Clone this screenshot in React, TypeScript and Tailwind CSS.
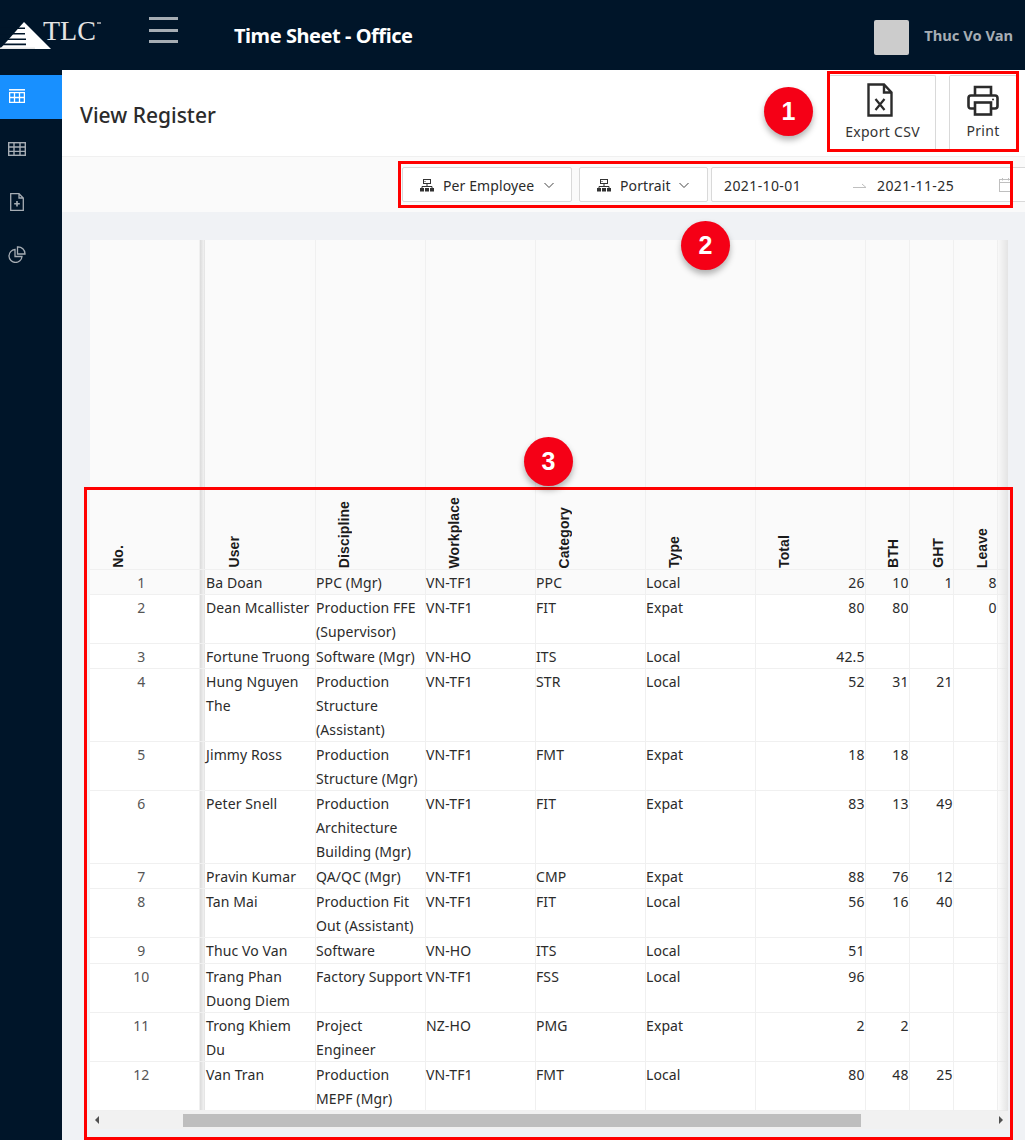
import React from "react";

type Row = { h: string; n: number; u: string; d: string; w: string; c: string; t: string; total?: string; bth?: string; ght?: string; leave?: string; bg?: boolean };
const rows: Row[] = [
  { h: "h-[25px]", n: 1, u: "Ba Doan", d: "PPC (Mgr)", w: "VN-TF1", c: "PPC", t: "Local", total: "26", bth: "10", ght: "1", leave: "8", bg: true },
  { h: "h-[49px]", n: 2, u: "Dean Mcallister", d: "Production FFE (Supervisor)", w: "VN-TF1", c: "FIT", t: "Expat", total: "80", bth: "80", leave: "0" },
  { h: "h-[25px]", n: 3, u: "Fortune Truong", d: "Software (Mgr)", w: "VN-HO", c: "ITS", t: "Local", total: "42.5" },
  { h: "h-[73px]", n: 4, u: "Hung Nguyen The", d: "Production Structure (Assistant)", w: "VN-TF1", c: "STR", t: "Local", total: "52", bth: "31", ght: "21" },
  { h: "h-[49px]", n: 5, u: "Jimmy Ross", d: "Production Structure (Mgr)", w: "VN-TF1", c: "FMT", t: "Expat", total: "18", bth: "18" },
  { h: "h-[73px]", n: 6, u: "Peter Snell", d: "Production Architecture Building (Mgr)", w: "VN-TF1", c: "FIT", t: "Expat", total: "83", bth: "13", ght: "49" },
  { h: "h-[25px]", n: 7, u: "Pravin Kumar", d: "QA/QC (Mgr)", w: "VN-TF1", c: "CMP", t: "Expat", total: "88", bth: "76", ght: "12" },
  { h: "h-[49px]", n: 8, u: "Tan Mai", d: "Production Fit Out (Assistant)", w: "VN-TF1", c: "FIT", t: "Local", total: "56", bth: "16", ght: "40" },
  { h: "h-[26px]", n: 9, u: "Thuc Vo Van", d: "Software", w: "VN-HO", c: "ITS", t: "Local", total: "51" },
  { h: "h-[49px]", n: 10, u: "Trang Phan Duong Diem", d: "Factory Support", w: "VN-TF1", c: "FSS", t: "Local", total: "96" },
  { h: "h-[49px]", n: 11, u: "Trong Khiem Du", d: "Project Engineer", w: "NZ-HO", c: "PMG", t: "Expat", total: "2", bth: "2" },
  { h: "h-[49px]", n: 12, u: "Van Tran", d: "Production MEPF (Mgr)", w: "VN-TF1", c: "FMT", t: "Local", total: "80", bth: "48", ght: "25" },
];

const Org = () => (
  <svg width="14" height="14" viewBox="0 0 14 14" fill="none" stroke="#333" strokeWidth="1">
    <rect x="3.5" y="1.5" width="7" height="4" />
    <path d="M4.5 3.5h1M7 5.5v3M2 10V8.5h10V10" />
    <rect x="0.5" y="10.5" width="3" height="2.5" fill="#333" />
    <rect x="5.5" y="10.5" width="3" height="2.5" fill="#333" />
    <rect x="10.5" y="10.5" width="3" height="2.5" fill="#333" />
  </svg>
);

const Chevron = () => (
  <svg width="10" height="10" viewBox="0 0 10 10" fill="none" stroke="#444" strokeWidth="1"><path d="M0.5 3l4.5 4.5L9.5 3" /></svg>
);

const Badge = ({ n, pos }: { n: number; pos: string }) => (
  <div className={`absolute w-[49px] h-[49px] rounded-full bg-[#f50016] text-white flex items-center justify-center text-[25px] font-bold font-['Liberation_Sans',sans-serif] shadow-[0_4px_6px_rgba(0,0,0,0.3)] ${pos}`}>
    {n}
  </div>
);

const Hd = ({ t, pad }: { t: string; pad: string }) => (
  <th className="p-0 align-bottom border-r border-b border-[#f0f0f0] bg-[#fafafa]">
    <div className={`h-[329px] flex items-end pb-[1px] ${pad}`}>
      <span className="[writing-mode:vertical-rl] rotate-180 font-bold text-[14px] leading-[22px] text-[#1a1a1a] font-['Liberation_Sans',sans-serif]">{t}</span>
    </div>
  </th>
);

const Td = ({ children, right, extra = "pl-[0.5px]" }: { children?: React.ReactNode; right?: boolean; extra?: string }) => (
  <td className={`p-0 align-top border-r border-b border-[#f0f0f0] leading-[24px] ${right ? "text-right" : ""} ${extra}`}>
    <div className="pt-[0.5px] -mb-[0.5px]">{children}</div>
  </td>
);

export default function App() {
  return (
    <div className="relative w-[1025px] h-[1140px] overflow-hidden bg-[#f0f2f5] text-[14px] tracking-[0.1px] text-[#2b2b2b] font-['Noto_Sans',sans-serif] flex flex-col">
      <header className="h-[70px] shrink-0 bg-[#001529] flex items-center">
        <div className="w-[149px] h-full relative">
          <svg width="52" height="28" viewBox="0 0 52 28" className="absolute left-0 top-[21px]">
            <path d="M24 1L51 28H0L24 1Z" fill="#fff" />
            <path d="M0 6.500H25V8H0ZM0 12H25V13.500H0ZM0 17.500H26V19H0ZM0 22.500H26V24.300H0Z" fill="#001529" />
            <path d="M0 26.500H35V28H0Z" fill="#e8e8e8" />
          </svg>
          <span className="absolute left-[43px] top-[17px] font-['Liberation_Serif',serif] text-[28px] leading-[28px] tracking-[0px] text-[#e4e4e4]">TLC</span>
          <span className="absolute left-[97px] top-[22px] w-[4px] h-[2px] bg-[#8a8f96]" />
        </div>
        <div className="w-[29px] h-[26px] flex flex-col justify-between mt-[-10px]">
          <span className="h-[3px] bg-[#a6adb4]" /><span className="h-[3px] bg-[#a6adb4]" /><span className="h-[3px] bg-[#a6adb4]" />
        </div>
        <div className="ml-[56px] mt-[2px] text-[20px] leading-[28px] font-bold text-white tracking-[-0.45px]">Time Sheet - Office</div>
        <div className="ml-auto flex items-center pr-[12px] mt-[5px]">
          <div className="w-[35px] h-[35px] rounded-[2px] bg-[#cccccc]" />
          <div className="ml-[15px] mb-[4px] font-bold text-[#a6adb4] text-[14.7px] tracking-normal">Thuc Vo Van</div>
        </div>
      </header>

      <div className="flex flex-1 min-h-0">
        <aside className="w-[62px] shrink-0 bg-[#001529] pt-[5px] flex flex-col">
          <div className="h-[44px] bg-[#1890ff] flex items-center pl-[9px]">
            <svg width="16" height="14" viewBox="0 0 16 14" fill="none" stroke="#fff" className="-mt-[2px]">
              <path d="M0 0.800h16" strokeWidth="1.500" />
              <rect x="0.6" y="3.600" width="14.800" height="9.800" strokeWidth="1.300" />
              <path d="M0 8.500h16M5.500 3.500v10M10.500 3.500v10" strokeWidth="1.300" />
            </svg>
          </div>
          <div className="h-[9px]" />
          <div className="h-[44px] flex items-center pl-[8px]">
            <svg width="18" height="14" viewBox="0 0 18 14" fill="none" stroke="#a6adb4" strokeWidth="1.400" className="-mt-[2px]">
              <rect x="0.700" y="0.700" width="16.600" height="12.600" />
              <path d="M0 5h18M0 9.400h18M6 0v14M12 0v14" />
            </svg>
          </div>
          <div className="h-[9px]" />
          <div className="h-[44px] flex items-center pl-[10px]">
            <svg width="14" height="18" viewBox="0 0 14 18" fill="none" stroke="#a6adb4" strokeWidth="1.300" className="-mt-[2px]">
              <path d="M0.700 0.700H9L13.300 5V17.300H0.700Z M9 0.700V5H13.300" />
              <path d="M7 8V13.500 M4.200 10.800H9.800" strokeWidth="1.600" />
            </svg>
          </div>
          <div className="h-[9px]" />
          <div className="h-[44px] flex items-center pl-[8px]">
            <svg width="18" height="17" viewBox="0 0 18 17" fill="none" stroke="#a6adb4" strokeWidth="1.300" className="-mt-[3px]">
              <path d="M7 3.500A6.500 6.500 0 1 0 14 10.500H7Z" />
              <path d="M9.500 0.800A7 7 0 0 1 17 8H9.500Z" />
            </svg>
          </div>
        </aside>

        <main className="flex-1 min-w-0 flex flex-col overflow-hidden">
          <div className="h-[87px] shrink-0 bg-white border-b border-[#f0f0f0] flex items-center justify-between pl-[18px]">
            <h1 className="text-[21px] font-medium text-[#2b2b2b] leading-[28px] mt-[3px] tracking-normal">View Register</h1>
            <div className="flex h-[76px] mt-[5px] self-start pr-[8px]">
              <div className="w-[107px] border border-b-0 border-[#d9d9d9] rounded-t-[2px] flex flex-col items-center pt-[7px] mr-[13px]">
                <svg width="26" height="34" viewBox="0 0 26 34" fill="none" stroke="#2b2b2b" strokeWidth="2.400" className="-ml-[5px]">
                  <path d="M1.500 1.500H17L24.500 9.500V32.500H1.500Z M17 1.500V9.500H24.500" />
                  <path d="M8.500 16L17.500 27M17.500 16L8.500 27" strokeWidth="2.200" />
                </svg>
                <span className="text-[14px] leading-[20px] mt-[5px] tracking-[0.3px] text-[#333]">Export CSV</span>
              </div>
              <div className="w-[68px] border-l border-t border-r border-[#d9d9d9] rounded-t-[2px] flex flex-col items-center pt-[9px]">
                <svg width="32" height="31" viewBox="0 0 32 31" fill="none" stroke="#2b2b2b" strokeWidth="2.600">
                  <path d="M8 10V2H24V10" />
                  <path d="M8 23.500H4Q1.500 23.500 1.500 21V13Q1.500 10.500 4 10.500H28Q30.500 10.500 30.500 13V21Q30.500 23.500 28 23.500H24" />
                  <rect x="8" y="17.500" width="16" height="12" />
                  <circle cx="26" cy="14.500" r="1" fill="#2b2b2b" stroke="none" />
                </svg>
                <span className="text-[14px] leading-[20px] mt-[5px] tracking-[0.3px] text-[#333]">Print</span>
              </div>
            </div>
          </div>

          <div className="h-[55px] shrink-0 bg-[#fafafa] flex items-start pt-[10px] pl-[340px]">
            <div className="h-[35px] w-[170px] shrink-0 bg-white border border-[#d9d9d9] rounded-[2px] flex items-center pl-[17px] mr-[7px]">
              <Org /><span className="ml-[9px] mt-[1px]">Per Employee</span><span className="ml-[10px] flex"><Chevron /></span>
            </div>
            <div className="h-[35px] w-[129px] shrink-0 bg-white border border-[#d9d9d9] rounded-[2px] flex items-center pl-[17px] mr-[3px]">
              <Org /><span className="ml-[9px] mt-[1px]">Portrait</span><span className="ml-[8px] flex"><Chevron /></span>
            </div>
            <div className="h-[35px] w-[330px] shrink-0 bg-white border border-[#d9d9d9] rounded-[2px] flex items-center pl-[12px] tracking-[0.4px]">
              <span className="w-[129px] mt-[1px]">2021-10-01</span>
              <span className="w-[24px] text-[#bfbfbf] flex">
                <svg width="14" height="8" viewBox="0 0 14 8" fill="none" stroke="#bfbfbf"><path d="M0 6.500H13L9 3" /></svg>
              </span>
              <span className="w-[122px] mt-[1px]">2021-11-25</span>
              <svg width="13" height="14" viewBox="0 0 13 14" fill="none" stroke="#bfbfbf"><rect x="0.500" y="1.500" width="12" height="12" /><path d="M0.500 4.500H12.500M3.500 0V2.500M9.500 0V2.500" /></svg>
            </div>
          </div>

          <div className="flex-1 min-h-0 pt-[28px] pl-[28px] pr-[17px]">
            <div className="relative w-[918px] overflow-hidden bg-white">
              <table className="table-fixed border-collapse w-[918px]">
                <colgroup>
                  <col className="w-[109px]" /><col className="w-[6px]" /><col className="w-[110px]" /><col className="w-[110px]" /><col className="w-[110px]" /><col className="w-[110px]" /><col className="w-[110px]" /><col className="w-[110px]" /><col className="w-[44px]" /><col className="w-[44px]" /><col className="w-[44px]" /><col className="w-[11px]" />
                </colgroup>
                <thead>
                  <tr>
                    <Hd t="No." pad="pl-[17px]" />
                    <th className="p-0 bg-gradient-to-r from-[#d8d8d8] to-[#f4f4f4] border-b border-[#f0f0f0]" />
                    <Hd t="User" pad="pl-[18px]" />
                    <Hd t="Discipline" pad="pl-[17px]" />
                    <Hd t="Workplace" pad="pl-[17px]" />
                    <Hd t="Category" pad="pl-[17px]" />
                    <Hd t="Type" pad="pl-[17px]" />
                    <Hd t="Total" pad="pl-[17px]" />
                    <Hd t="BTH" pad="pl-[16px]" />
                    <Hd t="GHT" pad="pl-[17px]" />
                    <Hd t="Leave" pad="pl-[17px]" />
                    <th className="p-0 bg-[#fafafa] border-b border-[#f0f0f0]" />
                  </tr>
                </thead>
                <tbody>
                  {rows.map((r) => (
                    <tr key={r.n} className={`${r.h} ${r.bg ? "bg-[#fafafa]" : ""}`}>
                      <Td extra="text-center pr-[6px] text-[#555]">{r.n}</Td>
                      <td className="p-0 bg-gradient-to-r from-[#d8d8d8] to-[#f4f4f4] border-b border-[#f0f0f0]" />
                      <Td extra="pl-[1px] pr-[3px]">{r.u}</Td>
                      <Td>{r.d}</Td>
                      <Td>{r.w}</Td>
                      <Td>{r.c}</Td>
                      <Td>{r.t}</Td>
                      <Td right>{r.total}</Td>
                      <Td right>{r.bth}</Td>
                      <Td right>{r.ght}</Td>
                      <Td right>{r.leave}</Td>
                      <td className="p-0 border-b border-[#f0f0f0]" />
                    </tr>
                  ))}
                </tbody>
              </table>
              <div className="absolute right-0 top-0 bottom-0 w-[11px] bg-gradient-to-r from-transparent to-[#e4e4e4]" />
              <div className="h-[18px] bg-[#f1f1f1] flex items-center relative">
                <span className="absolute left-[5px] w-0 h-0 border-y-[4px] border-y-transparent border-r-[4px] border-r-[#505050]" />
                <span className="absolute left-[93px] w-[678px] h-[13px] bg-[#bebebe]" />
                <span className="absolute right-[5px] w-0 h-0 border-y-[4px] border-y-transparent border-l-[4px] border-l-[#505050]" />
              </div>
            </div>
          </div>
        </main>
      </div>

      <div className="absolute left-[827px] top-[71px] w-[192px] h-[81px] border-[3px] border-[#ff0000]" />
      <div className="absolute left-[398px] top-[161px] w-[615px] h-[47px] border-[3px] border-[#ff0000]" />
      <div className="absolute left-[84px] top-[487px] w-[929px] h-[653px] border-[3px] border-[#ff0000]" />
      <Badge n={1} pos="left-[764px] top-[87px]" />
      <Badge n={2} pos="left-[681px] top-[221px]" />
      <Badge n={3} pos="left-[524px] top-[437px]" />
    </div>
  );
}
